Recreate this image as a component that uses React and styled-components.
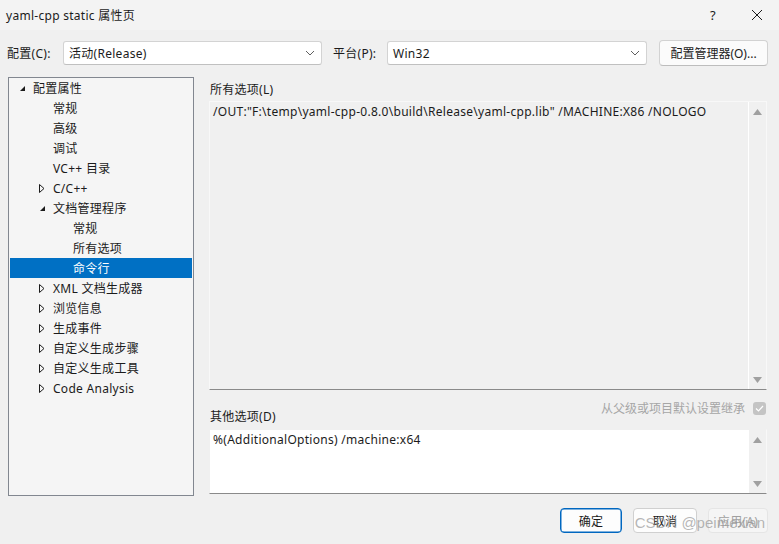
import React from "react"
import styled, { createGlobalStyle } from "styled-components"

const GlobalStyle = createGlobalStyle`
  html, body {
    margin: 0;
    padding: 0;
    background: #f0f0f0;
  }
  body {
    font-family: "Noto Sans", "Noto Sans CJK SC", sans-serif;
    font-size: 12px;
    letter-spacing: 0.28px;
    color: #1b1b1b;
  }
`

const tree = [
  { label: "配置属性", level: 0, arrow: "open" },
  { label: "常规", level: 1 },
  { label: "高级", level: 1 },
  { label: "调试", level: 1 },
  { label: "VC++ 目录", level: 1 },
  { label: "C/C++", level: 1, arrow: "closed" },
  { label: "文档管理程序", level: 1, arrow: "open" },
  { label: "常规", level: 2 },
  { label: "所有选项", level: 2 },
  { label: "命令行", level: 2, selected: true },
  { label: "XML 文档生成器", level: 1, arrow: "closed" },
  { label: "浏览信息", level: 1, arrow: "closed" },
  { label: "生成事件", level: 1, arrow: "closed" },
  { label: "自定义生成步骤", level: 1, arrow: "closed" },
  { label: "自定义生成工具", level: 1, arrow: "closed" },
  { label: "Code Analysis", level: 1, arrow: "closed" },
]

const Chevron = () => (
  <svg width="10" height="6" viewBox="0 0 10 6">
    <path d="M1 1 L5 5 L9 1" fill="none" stroke="#606060" strokeWidth="1" />
  </svg>
)

const Arrow = ({ kind }) =>
  kind === "open" ? (
    <svg width="7" height="7" viewBox="0 0 7 7">
      <path d="M6 1 L6 6 L1 6 Z" fill="#1b1b1b" />
    </svg>
  ) : (
    <svg width="6" height="9" viewBox="0 0 6 9">
      <path d="M0.5 0.5 L5 4.5 L0.5 8.5 Z" fill="none" stroke="#1b1b1b" strokeWidth="1" />
    </svg>
  )

const ScrollUp = () => (
  <svg width="9" height="6" viewBox="0 0 9 6">
    <path d="M4.5 0 L9 6 L0 6 Z" fill="#a0a0a0" />
  </svg>
)

const ScrollDown = () => (
  <svg width="9" height="6" viewBox="0 0 9 6">
    <path d="M0 0 L9 0 L4.5 6 Z" fill="#a0a0a0" />
  </svg>
)

const Close = () => (
  <svg width="12" height="12" viewBox="0 0 12 12">
    <path d="M1 1 L11 11 M11 1 L1 11" stroke="#1b1b1b" strokeWidth="1" />
  </svg>
)

const Check = () => (
  <svg width="9" height="7" viewBox="0 0 9 7">
    <path d="M1 3.5 L3.5 6 L8 1" fill="none" stroke="#ffffff" strokeWidth="1.2" />
  </svg>
)

const App = () => {
  return (
    <>
      <GlobalStyle />
      <Dialog>
        <TitleBar>
          <Title>yaml-cpp static 属性页</Title>
          <TitleButtons>
            <TitleButton>?</TitleButton>
            <TitleButton>
              <Close />
            </TitleButton>
          </TitleButtons>
        </TitleBar>

        <Toolbar>
          <FieldLabel $width={56}>配置(C):</FieldLabel>
          <Select $width={259}>
            <span>活动(Release)</span>
            <Chevron />
          </Select>
          <FieldLabel $width={54} $indent={11}>平台(P):</FieldLabel>
          <Select $width={260}>
            <span>Win32</span>
            <Chevron />
          </Select>
          <ToolButton>配置管理器(O)...</ToolButton>
        </Toolbar>

        <Content>
          <Tree>
            {tree.map((item, i) => (
              <TreeRow key={i} $level={item.level} $selected={item.selected}>
                <ArrowSlot>{item.arrow && <Arrow kind={item.arrow} />}</ArrowSlot>
                {item.label}
              </TreeRow>
            ))}
          </Tree>

          <Options>
            <SectionLabel>所有选项(L)</SectionLabel>
            <TextBox $height={289} $readonly>
              <BoxText>/OUT:"F:\temp\yaml-cpp-0.8.0\build\Release\yaml-cpp.lib" /MACHINE:X86 /NOLOGO</BoxText>
              <ScrollBar $readonly>
                <ScrollUp />
                <ScrollDown />
              </ScrollBar>
            </TextBox>

            <MiddleRow>
              <SectionLabel $bottom>其他选项(D)</SectionLabel>
              <Inherit>
                从父级或项目默认设置继承
                <CheckBox>
                  <Check />
                </CheckBox>
              </Inherit>
            </MiddleRow>

            <TextBox $height={65}>
              <BoxText>%(AdditionalOptions) /machine:x64</BoxText>
              <ScrollBar>
                <ScrollUp />
                <ScrollDown />
              </ScrollBar>
            </TextBox>
          </Options>
        </Content>

        <Footer>
          <DialogButton $width={62} $primary>确定</DialogButton>
          <DialogButton $width={64}>取消</DialogButton>
          <DialogButton $width={60} $disabled>应用(A)</DialogButton>
          <Watermark>CSDN @peimexian</Watermark>
        </Footer>
      </Dialog>
    </>
  )
}

export default App

/* ── Styled Components ── */

const Dialog = styled.div`
  width: 779px;
  height: 544px;
  display: flex;
  flex-direction: column;
  background: #f0f0f0;
  overflow: hidden;
`

const TitleBar = styled.div`
  height: 30px;
  display: flex;
  align-items: center;
  justify-content: space-between;
  padding-left: 6px;
  background: #f3f3f3;
`

const Title = styled.div`
  font-size: 12px;
  color: #1b1b1b;
`

const TitleButtons = styled.div`
  display: flex;
  height: 100%;
`

const TitleButton = styled.div`
  width: 44px;
  height: 100%;
  display: flex;
  align-items: center;
  justify-content: center;
  font-family: "Noto Sans", sans-serif;
  font-size: 13px;

  &:first-child {
    width: 46px;
    padding-left: 2px;
    box-sizing: border-box;
  }
`

const Toolbar = styled.div`
  margin-top: 10px;
  height: 26px;
  display: flex;
  align-items: center;
  padding-left: 7px;
`

const FieldLabel = styled.div`
  width: ${(p) => p.$width}px;
  margin-left: ${(p) => p.$indent || 0}px;
  margin-top: -1px;
`

const Select = styled.div`
  box-sizing: border-box;
  width: ${(p) => p.$width}px;
  height: 24px;
  display: flex;
  align-items: center;
  justify-content: space-between;
  padding: 0 6px 0 5px;
  background: #ffffff;
  border: 1px solid #d3d3d3;
  border-bottom-color: #c0c0c0;
  border-radius: 3px;
`

const ToolButton = styled.div`
  box-sizing: border-box;
  margin-left: 12px;
  width: 109px;
  height: 26px;
  display: flex;
  align-items: center;
  justify-content: center;
  letter-spacing: 0;
  background: #fbfbfb;
  border: 1px solid #d2d2d2;
  border-bottom-color: #bdbdbd;
  border-radius: 4px;
`

const Content = styled.div`
  margin-top: 11px;
  height: 419px;
  display: flex;
  gap: 15px;
  padding-left: 8px;
`

const Tree = styled.div`
  box-sizing: border-box;
  width: 186px;
  height: 100%;
  padding: 0 1px;
  background: #f5f5f5;
  border: 1px solid #828790;
`

const TreeRow = styled.div`
  height: 20px;
  display: flex;
  align-items: center;
  padding-left: ${(p) => 8 + p.$level * 20}px;
  background: ${(p) => (p.$selected ? "#0070c4" : "transparent")};
  color: ${(p) => (p.$selected ? "#ffffff" : "#1b1b1b")};
`

const ArrowSlot = styled.span`
  width: 15px;
  display: flex;
  align-items: center;
  padding-left: 1px;
  box-sizing: border-box;
`

const Options = styled.div`
  width: 558px;
  display: flex;
  flex-direction: column;
`

const SectionLabel = styled.div`
  height: 24px;
  display: flex;
  align-items: center;
  padding-left: 1px;
  align-self: ${(p) => (p.$bottom ? "flex-end" : "auto")};
  margin-bottom: ${(p) => (p.$bottom ? "1px" : "0")};
`

const TextBox = styled.div`
  box-sizing: border-box;
  height: ${(p) => p.$height}px;
  display: flex;
  background: ${(p) => (p.$readonly ? "#f0f0f0" : "#ffffff")};
  border-top: 1px solid ${(p) => (p.$readonly ? "#f8f8f8" : "#f0f0f0")};
  border-left: 1px solid ${(p) => (p.$readonly ? "#f8f8f8" : "#f0f0f0")};
  border-right: 1px solid #f8f8f8;
  border-bottom: 1px solid #8a8a8a;
`

const BoxText = styled.div`
  flex: 1;
  padding: 2px 0 0 3px;
  line-height: 16px;
  white-space: nowrap;
`

const ScrollBar = styled.div`
  width: 17px;
  display: flex;
  flex-direction: column;
  align-items: center;
  justify-content: space-between;
  padding: 7px 0 6px;
  background: #f0f0f0;
  border-left: 1px solid #ffffff;
`

const MiddleRow = styled.div`
  height: 39px;
  display: flex;
  justify-content: space-between;
`

const Inherit = styled.div`
  display: flex;
  align-items: center;
  gap: 8px;
  height: 16px;
  margin-top: 10px;
  letter-spacing: 0;
  color: #a6a6a6;
`

const CheckBox = styled.div`
  box-sizing: border-box;
  width: 13px;
  height: 13px;
  display: flex;
  align-items: center;
  justify-content: center;
  background: #c4c4c4;
  border-radius: 3px;
  margin-right: 1px;
`

const Footer = styled.div`
  position: relative;
  margin-top: 12px;
  display: flex;
  justify-content: flex-end;
  gap: 11px;
  padding-right: 11px;
`

const DialogButton = styled.div`
  box-sizing: border-box;
  width: ${(p) => p.$width}px;
  height: 25px;
  display: flex;
  align-items: center;
  justify-content: center;
  border-radius: 4px;
  background: ${(p) => (p.$disabled ? "#f5f5f5" : "#fdfdfd")};
  color: ${(p) => (p.$disabled ? "#a0a0a0" : "#1b1b1b")};
  border: 1px solid
    ${(p) => (p.$primary ? "#0067c0" : p.$disabled ? "#e5e5e5" : "#d0d0d0")};
  ${(p) => p.$primary && "box-shadow: inset 0 0 0 0.5px #0067c0;"}
`

const Watermark = styled.div`
  position: absolute;
  right: 14px;
  top: 6px;
  font-family: "Liberation Sans", Arial, sans-serif;
  font-size: 15px;
  letter-spacing: 0;
  color: rgba(150, 150, 150, 0.7);
  pointer-events: none;
`
